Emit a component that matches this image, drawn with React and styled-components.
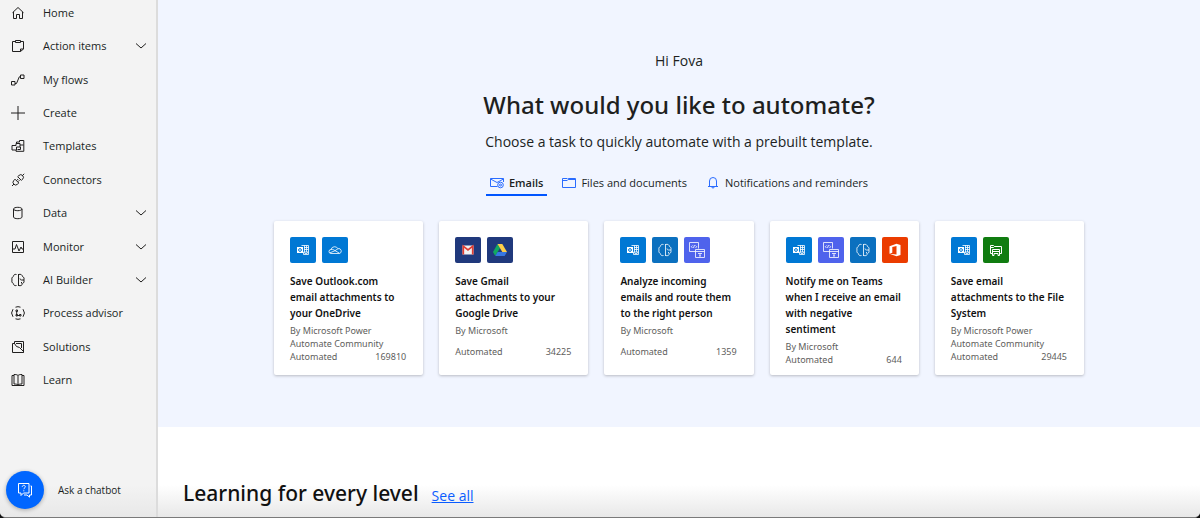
import React from "react";
import styled, { createGlobalStyle } from "styled-components";

const GlobalStyle = createGlobalStyle`
  * {
    box-sizing: border-box;
  }
  body {
    margin: 0;
    background: #111;
    font-family: "Open Sans", "Noto Sans", sans-serif;
    color: #201f1e;
  }
  button {
    border: 0;
    padding: 0;
    background: none;
    font: inherit;
    color: inherit;
    cursor: pointer;
  }
  h1, h2, h3, p, ul {
    margin: 0;
    padding: 0;
  }
`;

const Layout = styled.div`
  display: flex;
  height: 100vh;
  overflow: hidden;
  border-bottom: 1px solid #7a7a7a;
  border-radius: 0 0 6px 6px;
  background: #fff;
`;

const Sidebar = styled.aside`
  display: flex;
  flex-direction: column;
  flex: 0 0 158px;
  border-right: 2px solid #dcdcdc;
  background: linear-gradient(to top, #e8e8e8, #f3f3f3 32px);
`;

const NavList = styled.ul`
  flex: 1;
  display: grid;
  grid-auto-rows: 1fr;
  margin-top: -4px;
  list-style: none;
`;

const NavItem = styled.li`
  display: flex;
`;

const NavButton = styled.button`
  flex: 1;
  display: flex;
  align-items: center;
  padding: 0 8px 0 11px;
  font-size: 11px;
  line-height: 16px;
`;

const NavLabel = styled.span`
  flex: 1;
  margin-left: 18px;
  text-align: left;
  white-space: nowrap;
`;

const Icon = styled.svg`
  flex: none;
  width: ${(props) => props.$size || 14}px;
  height: ${(props) => props.$size || 14}px;
  fill: none;
  stroke: currentColor;
  stroke-width: 1;
`;

const ChatRow = styled.div`
  display: flex;
  align-items: flex-end;
  height: 120px;
  padding: 0 6px 8px;
`;

const ChatButton = styled.button`
  display: flex;
  align-items: center;
  gap: 14px;
  font-size: 10px;
  white-space: nowrap;
`;

const ChatCircle = styled.span`
  display: flex;
  align-items: center;
  justify-content: center;
  width: 38px;
  height: 38px;
  border-radius: 50%;
  background: #0066ff;
  color: #fff;
  box-shadow: 0 1px 4px rgba(0, 0, 0, 0.3);
`;

const Main = styled.main`
  flex: 1;
  display: flex;
  flex-direction: column;
  min-width: 0;
`;

const Hero = styled.section`
  display: flex;
  flex-direction: column;
  align-items: center;
  padding: 51px 16px 52px;
  background: #f1f5ff;
`;

const Greeting = styled.p`
  font-size: 14px;
  line-height: 20px;
`;

const Title = styled.h1`
  margin-top: 17px;
  font-family: "Noto Sans", sans-serif;
  font-size: 24px;
  font-weight: 500;
  line-height: 34px;
`;

const Subtitle = styled.p`
  margin-top: 10px;
  font-size: 14px;
  line-height: 20px;
`;

const Tabs = styled.div`
  display: flex;
  gap: 11px;
  margin-top: 19px;
`;

const Tab = styled.button`
  display: flex;
  align-items: center;
  gap: 5px;
  height: 25px;
  padding: 0 4px;
  border-bottom: 2px solid ${(props) => (props.$active ? "#0055ff" : "transparent")};
  font-size: 11px;
  font-weight: ${(props) => (props.$active ? 600 : 400)};
  white-space: nowrap;

  svg {
    color: #2a6cff;
  }
`;

const CardGrid = styled.div`
  display: grid;
  grid-template-columns: repeat(5, minmax(0, 1fr));
  gap: 16px;
  width: 100%;
  max-width: 810px;
  margin-top: 25px;
`;

const Card = styled.article`
  min-height: 154px;
  padding: 16px 17px 8px 16px;
  border-radius: 2px;
  background: #fff;
  box-shadow: 0 1px 3px rgba(0, 0, 0, 0.24);
`;

const Tiles = styled.div`
  display: flex;
  gap: 6px;
`;

const Tile = styled.span`
  flex: none;
  display: flex;
  align-items: center;
  justify-content: center;
  width: 26px;
  height: 26px;
  border-radius: 2px;
  background: ${(props) => props.$color};
  color: #fff;
`;

const CardText = styled.div`
  min-height: 72px;
  margin-top: 10px;
`;

const CardTitle = styled.h3`
  font-family: "Noto Sans", sans-serif;
  font-size: 10px;
  font-weight: 600;
  line-height: 16px;
  color: #111;
`;

const Author = styled.p`
  margin-top: 3px;
  font-family: "Noto Sans", sans-serif;
  font-size: 9px;
  line-height: 13px;
  color: #605e5c;
`;

const CardFooter = styled.div`
  display: flex;
  justify-content: space-between;
  font-family: "Noto Sans", sans-serif;
  font-size: 9px;
  line-height: 13px;
  color: #605e5c;
`;

const Learning = styled.section`
  flex: 1;
  display: flex;
  align-items: baseline;
  gap: 13px;
  padding: 51px 25px 0;
  background: linear-gradient(to top, #e8e8e8, #fff 32px);
`;

const LearningTitle = styled.h2`
  font-family: "Noto Sans", sans-serif;
  font-size: 21px;
  font-weight: 500;
  line-height: 30px;
  color: #111;
`;

const SeeAll = styled.a`
  font-size: 14px;
  color: #0a5cff;
  text-decoration: underline;
`;

const navIcons = {
  home: <path d="M1.5 6.7 7 1.5l5.5 5.2M2.500 6v6.500h3V8.500h3v4h3V6" />,
  clipboard: (
    <path d="M4.500 2.500h-3v10H9.500l3-2.500V2.500h-3M4.500 1.500h5v2h-5zM9.500 12.500V10h3" />
  ),
  flow: <path d="M.5 8.500h3.500v3.500H.5zM9.500 2h3.500v3.500H9.500zM4 10.500h1.500L8.300 3.800h1.200" />,
  plus: <path d="M7 0v14M0 7h14" />,
  templates: (
    <path d="M5.500 4.500V3h3V1.500h4.300v10.800H5V11M1 6.500h4V4.500h4v3.500H5.500V11H1zM9 6h3.500M6.500 10.500h3V8" />
  ),
  connectors: (
    <path d="M1 13l2-2M11.200 2.800l2-2M4 6.200 7.800 10 6.500 11.200a2.600 2.600 0 0 1-3.700-3.700zM6.700 3.700l3.700 3.700 1.200-1.200a2.600 2.600 0 0 0-3.700-3.700zM5.700 7.500l1.500-1.500M7 8.700l1.500-1.500" />
  ),
  data: (
    <path d="M2.500 3v8c0 1 2 1.700 4.300 1.700S11 12 11 11V3M2.500 3c0-1 2-1.700 4.300-1.700S11 2 11 3s-2 1.700-4.200 1.700S2.500 4 2.500 3z" />
  ),
  monitor: <path d="M1.500 1.500h11v11h-11zM1.500 9H4l1.500-4.500 2.500 6.500 2-4 1 2h1.500" />,
  brain: (
    <path d="M5.500 12.500C3.500 13 2.500 12 2.500 10.700 1 10 .5 8.500 1 7 .5 5.500 1 4 2.500 3.300 2.500 2 3.500 1 5.500 1.500M7.500 1v12M7.500 1.500c2.500-.7 3.700.5 4 2 1.500.6 1.900 2 1.400 3.500.5 1.500 0 3-1.400 3.600-.3 1.500-1.500 2.600-4 1.900M13 7h-2.500c-1 0-1.500-.7-1.500-1.500M10.500 10.500V9" />
  ),
  process: (
    <path d="M4.500 1.200a6.300 6.300 0 0 1 5 0M12 3.200a6.300 6.300 0 0 1 0 7.600M9.500 12.800a6.300 6.300 0 0 1-5 0M2 10.800a6.300 6.300 0 0 1 0-7.600M5 4h1.500v1.500H5zM5.700 5.500v4M5 8.500h1.500V10H5zM8.500 8.500H10V10H8.500zM6.500 9.500h2" />
  ),
  solutions: (
    <path d="M3.500 4V1.500h9v11M1.500 12.500v-9h2L5.500 6.500 8.500 7.500l4 4v1zM5 3.500h5.500V8" />
  ),
  learn: (
    <path d="M7 2.500v9.500M7 2.500C6 1.500 4.500 1.500 3 1.500v9.500c1.500 0 3 0 4 1 1-1 2.500-1 4-1V1.500c-1.500 0-3 0-4 1M3 2.500H1V12.500h12V2.500h-2" />
  ),
};

const navItems = [
  { label: "Home", icon: "home" },
  { label: "Action items", icon: "clipboard", expandable: true },
  { label: "My flows", icon: "flow" },
  { label: "Create", icon: "plus" },
  { label: "Templates", icon: "templates" },
  { label: "Connectors", icon: "connectors" },
  { label: "Data", icon: "data", expandable: true },
  { label: "Monitor", icon: "monitor", expandable: true },
  { label: "AI Builder", icon: "brain", expandable: true },
  { label: "Process advisor", icon: "process" },
  { label: "Solutions", icon: "solutions" },
  { label: "Learn", icon: "learn" },
];

const tabs = [
  {
    label: "Emails",
    icon: (
      <>
        <path d="M7.500 10.500H.500V2.500h13V6M.500 3l6.500 3.500L13.500 3" />
        <circle cx="10.500" cy="9" r="2.800" />
        <circle cx="10.500" cy="9" r="1" />
      </>
    ),
  },
  {
    label: "Files and documents",
    icon: <path d="M.500 2.500h4.700l1 1h7.300v8H.500zM.500 4.500h4.700l1-1M6.200 2.500h7.300V4" />,
  },
  {
    label: "Notifications and reminders",
    icon: (
      <path d="M2 10.500h10M3.500 10.500V5a3.500 3.500 0 0 1 7 0v5.500M5.700 10.700a1.300 1.300 0 0 0 2.600 0" />
    ),
  },
];

const connectors = {
  outlook: {
    color: "#0078d4",
    icon: (
      <>
        <path d="M5.500 2.500h7v6.500h-5M7.500 9v2.500h5V9M8 4.500h4.500M8 6.500h4.500M8.500 2.500v6.500M10.500 2.500v6.500M8 9.500l2 1.300 2-1.300" strokeWidth=".8" />
        <path d="M1 4h6v6H1z" fill="#fff" stroke="none" />
        <circle cx="4" cy="7" r="1.400" stroke="#0078d4" />
      </>
    ),
  },
  onedrive: {
    color: "#0078d4",
    icon: (
      <path d="M3 10.500a2 2 0 0 1 0-4A3.800 3.800 0 0 1 10 5.700a2.500 2.500 0 0 1 1.500 4.800zM3 6.500c2-.5 3 .5 4 1.200l4.500 2.500M2 9.800l5-2.100 3-2" strokeWidth=".8" />
    ),
  },
  gmail: {
    color: "#20397c",
    icon: (
      <>
        <path d="M1.500 2.500h11v9h-11z" fill="#f2f2f2" stroke="none" />
        <path d="M2.300 11.500V3.200L7 7l4.700-3.800v8.300" stroke="#e03c31" strokeWidth="1.700" />
      </>
    ),
  },
  drive: {
    color: "#20397c",
    size: 16,
    icon: (
      <g stroke="none">
        <path d="M5.500 2 1 10l2.300 4L8 6z" fill="#11a861" />
        <path d="M5.500 2h4.800L15 10h-4.700z" fill="#ffcf48" />
        <path d="M5.600 10H15l-2.400 4H3.300z" fill="#3777e3" />
      </g>
    ),
  },
  ai: { color: "#0b70bf", icon: <g strokeWidth=".8">{navIcons.brain}</g> },
  approval: {
    color: "#4f63ec",
    size: 16,
    icon: (
      <g strokeWidth=".8">
        <path d="M6.500 9.500h-6v-9h9v6M6.500 7.500h9v8h-9zM6.500 9.500h9" />
        <path d="M3.500 3.500 2.300 4.700 3.500 6M6.500 3.500l1.200 1.200L6.500 6M5.500 3 4.500 6M9 11.500h4M11 11.500v2.500M10 14h2" />
      </g>
    ),
  },
  office: {
    color: "#eb3c00",
    icon: (
      <path d="M1.500 3.200 8.500.7 12.500 2v10l-4 1.300-7-2.500 7 .7V3L4.300 4v5.700L1.500 10.800z" fill="#fff" stroke="none" />
    ),
  },
  files: {
    color: "#107c10",
    icon: (
      <path d="M3 10.500H1.500V2.500h3l1 1h7v7H11M1.500 4.500h3l1-1M3.500 6.500h7v6h-1.500V10.500H5v2H3.500zM3.500 8.500h7" />
    ),
  },
};

const templates = [
  {
    title: "Save Outlook.com email attachments to your OneDrive",
    author: "Microsoft Power Automate Community",
    uses: 169810,
    tiles: ["outlook", "onedrive"],
  },
  {
    title: "Save Gmail attachments to your Google Drive",
    author: "Microsoft",
    uses: 34225,
    tiles: ["gmail", "drive"],
  },
  {
    title: "Analyze incoming emails and route them to the right person",
    author: "Microsoft",
    uses: 1359,
    tiles: ["outlook", "ai", "approval"],
  },
  {
    title: "Notify me on Teams when I receive an email with negative sentiment",
    author: "Microsoft",
    uses: 644,
    tiles: ["outlook", "approval", "ai", "office"],
  },
  {
    title: "Save email attachments to the File System",
    author: "Microsoft Power Automate Community",
    uses: 29445,
    tiles: ["outlook", "files"],
  },
];

function SideNav() {
  return (
    <Sidebar>
      <NavList>
        {navItems.map((item) => (
          <NavItem key={item.label}>
            <NavButton>
              <Icon viewBox="0 0 14 14">{navIcons[item.icon]}</Icon>
              <NavLabel>{item.label}</NavLabel>
              {item.expandable && (
                <Icon viewBox="0 0 14 14" $size={14}>
                  <path d="M2 4.500 7 9l5-4.500" />
                </Icon>
              )}
            </NavButton>
          </NavItem>
        ))}
      </NavList>
      <ChatRow>
        <ChatButton>
          <ChatCircle>
            <Icon viewBox="0 0 16 16" $size={16}>
              <path d="M1.500 1.500h10.500v9.500H6.500L4 13.500V11H1.500zM13.500 4h1v9h-2v2.200L10 13H7" />
              <path d="M5.300 4.800c0-2 3-2 3 0 0 1.200-1.500 1.200-1.500 2.400M6.800 8.300v1" />
            </Icon>
          </ChatCircle>
          Ask a chatbot
        </ChatButton>
      </ChatRow>
    </Sidebar>
  );
}

function TemplateCard({ title, author, uses, tiles }) {
  return (
    <Card>
      <Tiles>
        {tiles.map((name) => {
          const { color, icon, size = 14 } = connectors[name];
          return (
            <Tile key={name} $color={color}>
              <Icon viewBox={`0 0 ${size} ${size}`} $size={size}>
                {icon}
              </Icon>
            </Tile>
          );
        })}
      </Tiles>
      <CardText>
        <CardTitle>{title}</CardTitle>
        <Author>{`By ${author}`}</Author>
      </CardText>
      <CardFooter>
        <span>Automated</span>
        <span>{uses}</span>
      </CardFooter>
    </Card>
  );
}

function App() {
  return (
    <>
      <GlobalStyle />
      <Layout>
        <SideNav />
        <Main>
          <Hero>
            <Greeting>Hi Fova</Greeting>
            <Title>What would you like to automate?</Title>
            <Subtitle>
              Choose a task to quickly automate with a prebuilt template.
            </Subtitle>
            <Tabs>
              {tabs.map((tab, i) => (
                <Tab key={tab.label} $active={i === 0}>
                  <Icon viewBox="0 0 14 14">{tab.icon}</Icon>
                  {tab.label}
                </Tab>
              ))}
            </Tabs>
            <CardGrid>
              {templates.map((template) => (
                <TemplateCard key={template.title} {...template} />
              ))}
            </CardGrid>
          </Hero>
          <Learning>
            <LearningTitle>Learning for every level</LearningTitle>
            <SeeAll href="#learn">See all</SeeAll>
          </Learning>
        </Main>
      </Layout>
    </>
  );
}

export default App;
